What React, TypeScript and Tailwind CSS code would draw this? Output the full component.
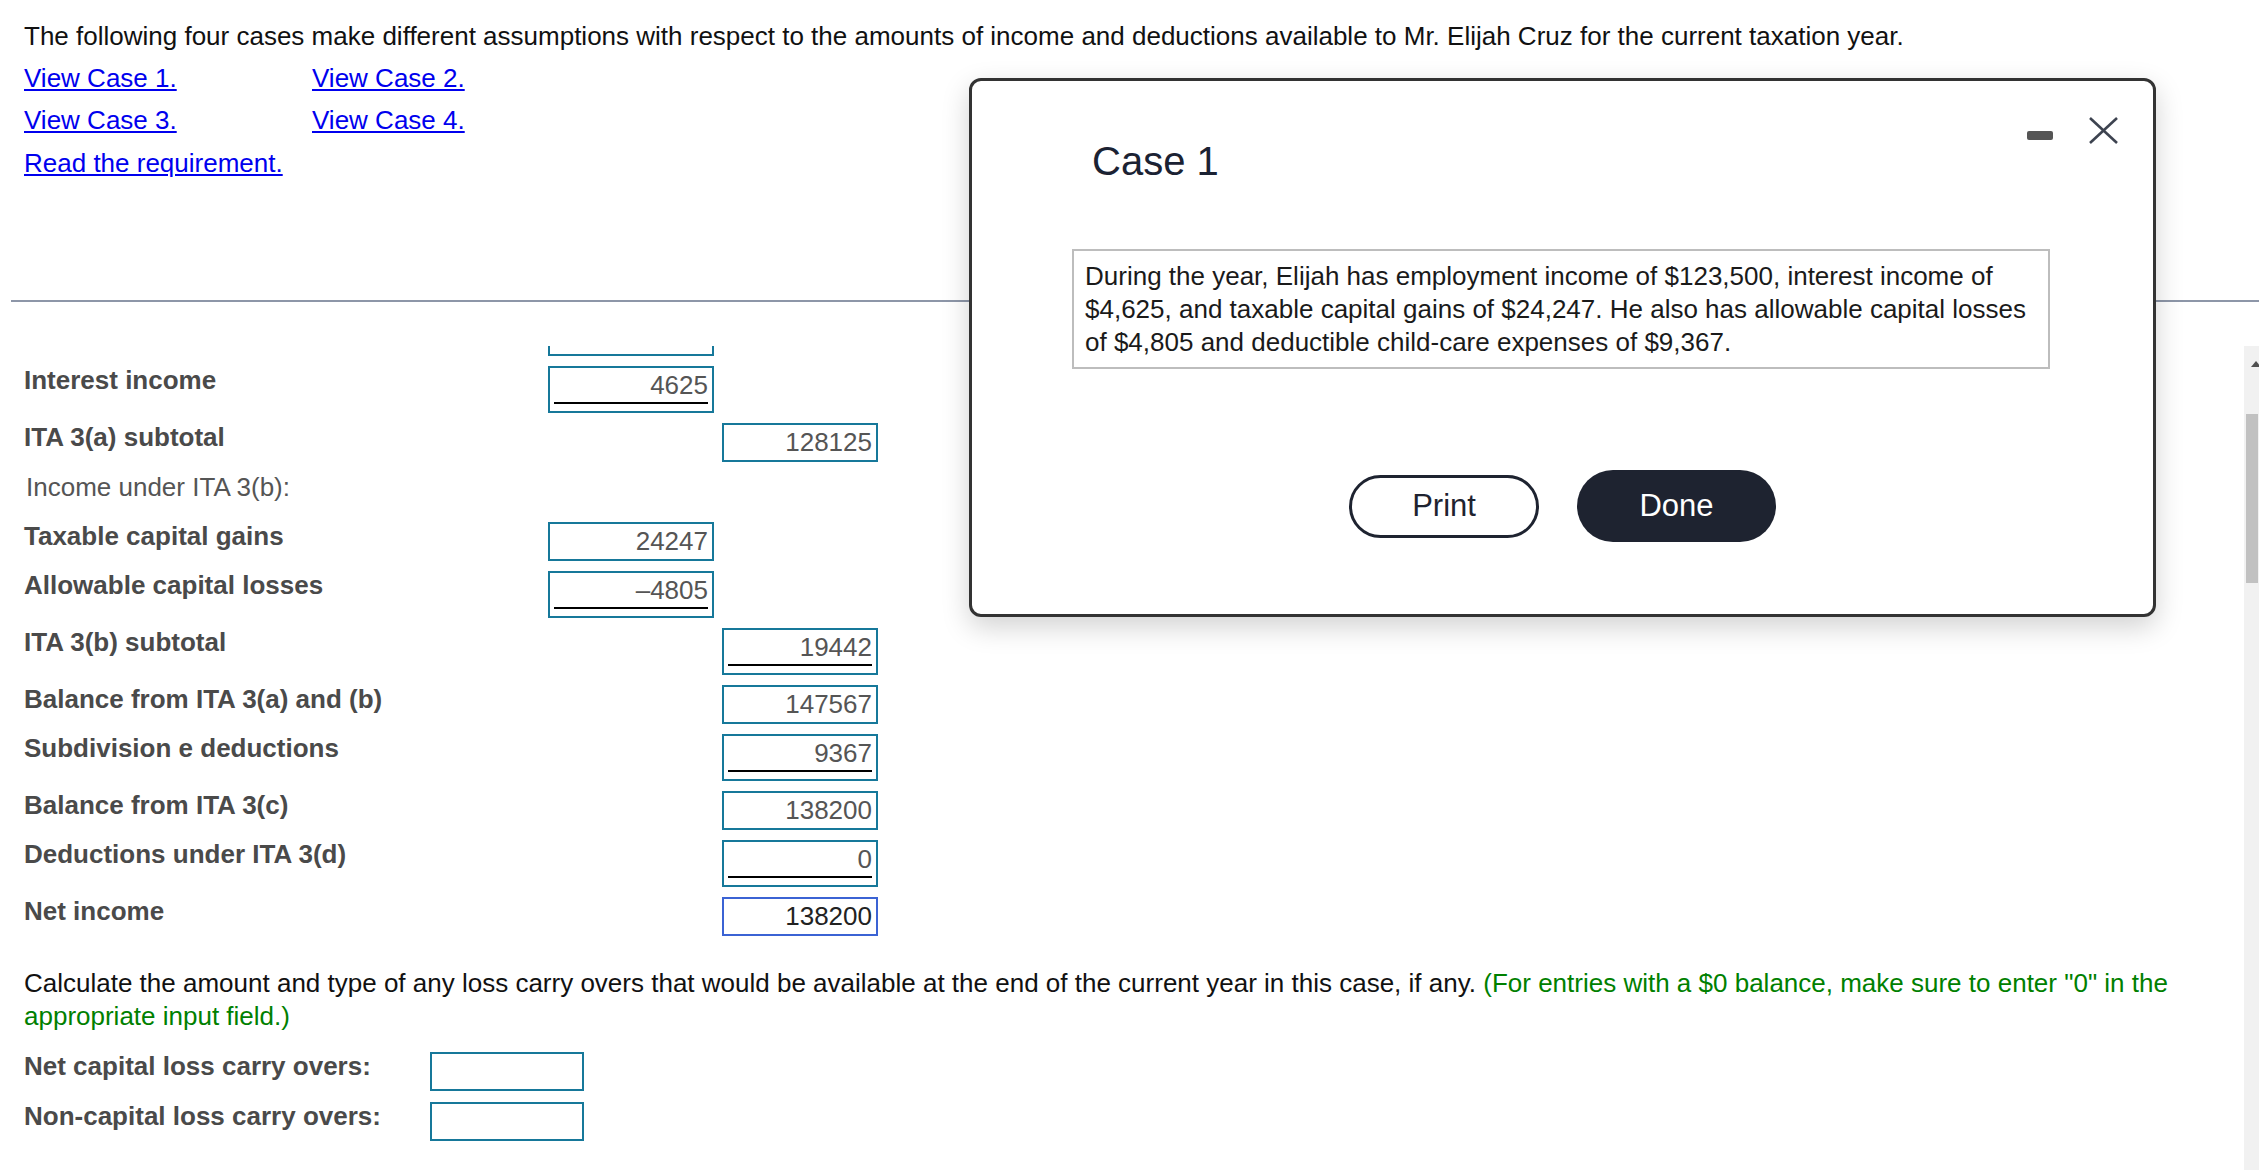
import React from "react";

type Cell = { value: string; underline?: boolean; net?: boolean } | null;

function ValueBox({ value, underline, net }: { value: string; underline?: boolean; net?: boolean }) {
  const border = net ? "border-[#3b63d4]" : "border-[#16789a]";
  const color = net ? "text-[#222]" : "text-[#555]";
  if (underline) {
    return (
      <div className={`border-2 ${border} w-full px-[4px]`}>
        <div className={`h-[34px] leading-[34px] text-right text-[26px] ${color}`}>{value}</div>
        <div className="h-[2px] bg-black" />
        <div className="h-[7px]" />
      </div>
    );
  }
  return (
    <div className={`border-2 ${border} w-full px-[4px]`}>
      <div className={`h-[35px] leading-[35px] text-right text-[26px] ${color}`}>{value}</div>
    </div>
  );
}

function Row({ label, c1, c2 }: { label: string; c1?: Cell; c2?: Cell }) {
  return (
    <div className="flex items-start mt-[10px]">
      <div className="w-[524px] text-[26px] leading-[28px] font-bold text-[#4a4a4a]">{label}</div>
      <div className="w-[166px]">{c1 ? <ValueBox {...c1} /> : null}</div>
      <div className="w-[156px] ml-[8px]">{c2 ? <ValueBox {...c2} /> : null}</div>
    </div>
  );
}

export default function App() {
  return (
    <div className="relative w-[2259px] h-[1170px] overflow-hidden bg-white font-['Liberation_Sans',Arial,sans-serif] text-[#111]">
      {/* Top section */}
      <div className="pt-[20px]">
        <p className="ml-[24px] text-[26px] leading-[33px] text-[#111] whitespace-nowrap">
          The following four cases make different assumptions with respect to the amounts of income and deductions available to Mr. Elijah Cruz for the current taxation year.
        </p>
        <div className="ml-[24px] mt-[4px] text-[26px] leading-[42px] text-[#0000ee]">
          <div className="grid grid-cols-[288px_300px]">
            <a className="underline w-max" href="#">View Case 1.</a>
            <a className="underline w-max" href="#">View Case 2.</a>
            <a className="underline w-max" href="#">View Case 3.</a>
            <a className="underline w-max" href="#">View Case 4.</a>
          </div>
          <div className="mt-[1px]">
            <a className="underline" href="#">Read the requirement.</a>
          </div>
        </div>
        <div className="mt-[116px] ml-[11px] h-[2px] bg-[#8d96a8]" />
      </div>

      {/* Scroll area */}
      <div className="mt-[44px] flex h-[824px]">
        <div className="flex-1 overflow-hidden pl-[24px]">
          <div className="ml-[524px] w-[166px] h-[10px] border-x-2 border-b-2 border-[#16789a]" />
          <div className="mt-[1px]">
            <Row label="Interest income" c1={{ value: "4625", underline: true }} />
            <Row label="ITA 3(a) subtotal" c2={{ value: "128125" }} />
            <div className="flex items-start mt-[10px] h-[40px]">
              <div className="w-[524px] text-[26px] leading-[30px] text-[#555] pl-[2px]">Income under ITA 3(b):</div>
            </div>
            <Row label="Taxable capital gains" c1={{ value: "24247" }} />
            <Row label="Allowable capital losses" c1={{ value: "\u20134805", underline: true }} />
            <Row label="ITA 3(b) subtotal" c2={{ value: "19442", underline: true }} />
            <Row label="Balance from ITA 3(a) and (b)" c2={{ value: "147567" }} />
            <Row label="Subdivision e deductions" c2={{ value: "9367", underline: true }} />
            <Row label="Balance from ITA 3(c)" c2={{ value: "138200" }} />
            <Row label="Deductions under ITA 3(d)" c2={{ value: "0", underline: true }} />
            <Row label="Net income" c2={{ value: "138200", net: true }} />
          </div>

          <p className="mt-[31px] text-[26px] leading-[33px] text-[#111] whitespace-nowrap">
            Calculate the amount and type of any loss carry overs that would be available at the end of the current year in this case, if any.{" "}
            <span className="text-[#008000]">(For entries with a $0 balance, make sure to enter "0" in the</span>
            <br />
            <span className="text-[#008000]">appropriate input field.)</span>
          </p>

          <div className="flex items-start mt-[19px]">
            <div className="w-[406px] text-[26px] leading-[28px] font-bold text-[#4a4a4a]">Net capital loss carry overs:</div>
            <div className="w-[154px] h-[39px] border-2 border-[#16789a]" />
          </div>
          <div className="flex items-start mt-[11px]">
            <div className="w-[406px] text-[26px] leading-[28px] font-bold text-[#4a4a4a]">Non-capital loss carry overs:</div>
            <div className="w-[154px] h-[39px] border-2 border-[#16789a]" />
          </div>
        </div>

        {/* Scrollbar */}
        <div className="w-[15px] h-full bg-[#f1f1f1] flex flex-col">
          <div className="mt-[15px] ml-[7px] w-0 h-0 border-l-[5px] border-r-[5px] border-b-[6px] border-l-transparent border-r-transparent border-b-[#505050]" />
          <div className="mt-[47px] ml-[2px] w-[12px] h-[169px] bg-[#c1c1c1]" />
        </div>
      </div>

      {/* Modal */}
      <div className="absolute left-[969px] top-[78px] w-[1187px] h-[539px] border-[3px] border-[#333] rounded-[12px] bg-white shadow-[0_10px_28px_rgba(0,0,0,0.18)]">
        <div className="absolute right-[34px] top-[36px] flex items-center">
          <div className="w-[26px] h-[9px] bg-[#555] rounded-[2px] mt-[9px]" />
          <svg width="31" height="27" viewBox="0 0 31 27" className="ml-[35px]">
            <line x1="2" y1="1" x2="29" y2="26" stroke="#3d4350" strokeWidth="2.6" />
            <line x1="29" y1="1" x2="2" y2="26" stroke="#3d4350" strokeWidth="2.6" />
          </svg>
        </div>
        <div className="ml-[120px] mt-[57px] text-[40px] leading-[46px] text-[#1b2233]">Case 1</div>
        <div className="ml-[100px] mt-[65px] w-[978px] border-2 border-[#bdbdbd] pl-[11px] pt-[9px] pb-[8px] text-[26px] leading-[33px] text-[#1a1a1a] whitespace-nowrap">
          During the year, Elijah has employment income of $123,500, interest income of
          <br />
          $4,625, and taxable capital gains of $24,247. He also has allowable capital losses
          <br />
          of $4,805 and deductible child-care expenses of $9,367.
        </div>
        <div className="mt-[101px] flex items-center justify-center gap-[38px]">
          <button className="w-[190px] h-[63px] rounded-full border-[3px] border-[#1e2330] bg-white text-[31px] text-[#1e2330]">
            Print
          </button>
          <button className="w-[199px] h-[72px] rounded-full bg-[#1e2330] text-[31px] text-white">
            Done
          </button>
        </div>
      </div>
    </div>
  );
}
